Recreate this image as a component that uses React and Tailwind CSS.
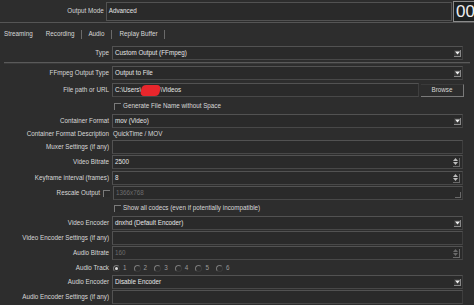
import React from "react";

const font = { fontFamily: '"Liberation Sans", Arial, sans-serif' };

function DropArrow() {
  return (
    <span className="absolute right-[1px] top-[3px] w-[7px] h-[7px] border-r border-b border-[#8a8a8a] bg-[#3a3a3a] flex items-center justify-center">
      <svg width="5" height="4" viewBox="0 0 5 4">
        <path d="M0 0.5 H5 L2.5 3.5 Z" fill="#f0f0f0" />
      </svg>
    </span>
  );
}

function Spin({ dim }) {
  const c = dim ? "#6a6a6a" : "#bdbdbd";
  return (
    <span className="absolute right-[2px] top-[2px] flex flex-col gap-[1px] border-r border-b border-[#6a6a6a] pr-[1px] pb-[1px]">
      <svg width="5" height="3" viewBox="0 0 5 3">
        <path d="M0 3 H5 L2.5 0 Z" fill={c} />
      </svg>
      <svg width="5" height="3" viewBox="0 0 5 3">
        <path d="M0 0 H5 L2.5 3 Z" fill={c} />
      </svg>
    </span>
  );
}

function Field({ children, w = "w-[351px]", arrow, spin, dim, box }) {
  return (
    <div
      className={`${w} h-[14px] relative flex items-center pl-[2px] bg-[#2a2a2a] border border-[#525252] border-r-[#3e3e3e] border-b-[#484848] ${dim ? "text-[#6c6c6c]" : "text-[#e6e6e6]"}`}
    >
      {children}
      {arrow && <DropArrow />}
      {spin && <Spin dim={dim} />}
      {box && (
        <span className="absolute right-[1px] bottom-[1px] w-[6px] h-[6px] border-r border-b border-[#6a6a6a]" />
      )}
    </div>
  );
}

function Check({ className = "" }) {
  return (
    <span className={`inline-block w-[7px] h-[7px] border-l border-t border-[#7a7a7a] bg-[#2a2a2a] ${className}`} />
  );
}

function Row({ label, h = "h-[14px]", mt = "mt-0", children }) {
  return (
    <div className={`flex items-center ${h} ${mt}`}>
      <div className="w-[109px] text-right text-[#d8d8d8] whitespace-nowrap">{label}</div>
      <div className="ml-[3px] flex items-center">{children}</div>
    </div>
  );
}

function Radio({ n, on }) {
  return (
    <span className="flex items-center w-[20.6px] shrink-0">
      <span className="w-[7px] h-[7px] rounded-full border border-[#7a7a7a] border-r-[#3a3a3a] border-b-[#3a3a3a] flex items-center justify-center">
        {on && <span className="w-[3px] h-[3px] rounded-full bg-[#dcdcdc]" />}
      </span>
      <span className="ml-[3px] text-[#9a9a9a]">{n}</span>
    </span>
  );
}

export default function App() {
  return (
    <div
      className="w-[474px] h-[305px] overflow-hidden bg-[#2d2d2d] text-[6.3px] leading-none select-none"
      style={font}
    >
      {/* output mode */}
      <div className="flex items-center h-[23px] border-b border-[#555]">
        <div className="w-[104px] text-right text-[#d8d8d8]">Output Mode</div>
        <div className="ml-[2px] w-[347px] h-[19px] flex items-center pl-[2px] bg-[#2a2a2a] border border-[#525252] text-[#e6e6e6]">
          Advanced
        </div>
        <div className="ml-[1px] w-[21px] h-[21px] shrink-0 overflow-hidden border border-[#8a8a8a] border-r-0 bg-[#1d2020] flex items-center pl-[2px] text-[#eeeeee] text-[17px] whitespace-nowrap">
          00
        </div>
      </div>

      {/* tabs */}
      <div className="flex items-center h-[22px] text-[#d8d8d8]">
        <span className="ml-[4px]">Streaming</span>
        <span className="ml-[13px]">Recording</span>
        <span className="ml-[7px] w-px h-[9px] bg-[#6a6a6a]" />
        <span className="ml-[6px]">Audio</span>
        <span className="ml-[6px] w-px h-[9px] bg-[#6a6a6a]" />
        <span className="ml-[8px]">Replay Buffer</span>
        <span className="ml-[6px] w-px h-[9px] bg-[#6a6a6a]" />
      </div>

      <div className="flex flex-col">
        <Row label="Type" mt="mt-[1px]">
          <Field arrow>Custom Output (FFmpeg)</Field>
        </Row>
        <div className="mt-[2px] ml-[4px] w-[466px] h-[2px] border-t border-[#5a5a5a] border-b border-b-[#3a3a3a]" />

        <Row label="FFmpeg Output Type" mt="mt-[2px]">
          <Field arrow>Output to File</Field>
        </Row>
        <Row label="File path or URL" mt="mt-[3px]">
          <Field w="w-[307px]">
            C:\Users\
            <span className="inline-block w-[19px] h-[11px] bg-[#e8262c] rounded-[4px] -skew-x-12" />
            \Videos
          </Field>
          <div className="ml-[2px] w-[43px] h-[13px] border-r border-b border-[#7a7a7a] border-t border-t-[#3a3a3a] flex items-center justify-center text-[#d8d8d8]">
            Browse
          </div>
        </Row>
        <Row label="" mt="mt-[2px]">
          <Check className="ml-[2px]" />
          <span className="ml-[2px] text-[#d8d8d8]">Generate File Name without Space</span>
        </Row>
        <Row label="Container Format" mt="mt-[1px]">
          <Field arrow>mov (Video)</Field>
        </Row>
        <Row label="Container Format Description" h="h-[12px]">
          <span className="pl-[1px] text-[#d8d8d8]">QuickTime / MOV</span>
        </Row>
        <Row label="Muxer Settings (if any)">
          <Field />
        </Row>
        <Row label="Video Bitrate" mt="mt-[1px]">
          <Field spin>2500</Field>
        </Row>
        <Row label="Keyframe interval (frames)" mt="mt-[2px]">
          <Field spin>8</Field>
        </Row>
        <div className="flex items-center h-[14px] mt-[1px]">
          <div className="w-[100px] text-right text-[#d8d8d8]">Rescale Output</div>
          <Check className="ml-[3px]" />
          <div className="ml-[3px]">
            <Field w="w-[350px]" dim box>1366x768</Field>
          </div>
        </div>
        <Row label="" mt="mt-[1px]">
          <Check className="ml-[2px]" />
          <span className="ml-[2px] text-[#d8d8d8]">Show all codecs (even if potentially incompatible)</span>
        </Row>
        <Row label="Video Encoder" mt="mt-[1px]">
          <Field arrow>dnxhd (Default Encoder)</Field>
        </Row>
        <Row label="Video Encoder Settings (if any)" mt="mt-[1px]">
          <Field />
        </Row>
        <Row label="Audio Bitrate" mt="mt-[1px]">
          <Field spin dim>160</Field>
        </Row>
        <Row label="Audio Track" mt="mt-[1px]">
          <div className="flex items-center ml-[1px]">
            <Radio n="1" on />
            <Radio n="2" />
            <Radio n="3" />
            <Radio n="4" />
            <Radio n="5" />
            <Radio n="6" />
          </div>
        </Row>
        <Row label="Audio Encoder">
          <Field arrow>Disable Encoder</Field>
        </Row>
        <Row label="Audio Encoder Settings (if any)" mt="mt-[1px]">
          <Field />
        </Row>
      </div>
    </div>
  );
}
